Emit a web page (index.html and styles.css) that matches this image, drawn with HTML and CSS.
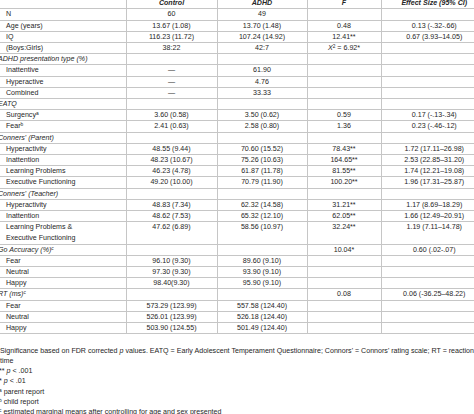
FILE: index.html
```html
<!DOCTYPE html>
<html lang="en">
<head>
<meta charset="utf-8">
<title>Table</title>
<link rel="stylesheet" href="styles.css">
</head>
<body>
<div class="page">
<table class="data">
<colgroup>
<col class="c0"><col class="c1"><col class="c2"><col class="c3"><col class="c4">
</colgroup>
<thead>
<tr class="head"><th></th><th>Control</th><th>ADHD</th><th>F</th><th>Effect Size (95% CI)</th></tr>
</thead>
<tbody>
<tr><td class="lbl">N</td><td>60</td><td>49</td><td></td><td></td></tr>
<tr><td class="lbl">Age (years)</td><td>13.67 (1.08)</td><td>13.70 (1.48)</td><td>0.48</td><td>0.13 (-.32-.66)</td></tr>
<tr><td class="lbl">IQ</td><td>116.23 (11.72)</td><td>107.24 (14.92)</td><td>12.41**</td><td>0.67 (3.93–14.05)</td></tr>
<tr><td class="lbl">(Boys:Girls)</td><td>38:22</td><td>42:7</td><td><i>X</i><sup>2</sup> = 6.92*</td><td></td></tr>
<tr><td class="sec">ADHD presentation type (%)</td><td></td><td></td><td></td><td></td></tr>
<tr><td class="lbl">Inattentive</td><td>—</td><td>61.90</td><td></td><td></td></tr>
<tr><td class="lbl">Hyperactive</td><td>—</td><td>4.76</td><td></td><td></td></tr>
<tr><td class="lbl">Combined</td><td>—</td><td>33.33</td><td></td><td></td></tr>
<tr><td class="sec">EATQ</td><td></td><td></td><td></td><td></td></tr>
<tr><td class="lbl">Surgency<sup>a</sup></td><td>3.60 (0.58)</td><td>3.50 (0.62)</td><td>0.59</td><td>0.17 (-.13-.34)</td></tr>
<tr><td class="lbl">Fear<sup>b</sup></td><td>2.41 (0.63)</td><td>2.58 (0.80)</td><td>1.36</td><td>0.23 (-.46-.12)</td></tr>
<tr><td class="sec">Conners' (Parent)</td><td></td><td></td><td></td><td></td></tr>
<tr><td class="lbl">Hyperactivity</td><td>48.55 (9.44)</td><td>70.60 (15.52)</td><td>78.43**</td><td>1.72 (17.11–26.98)</td></tr>
<tr><td class="lbl">Inattention</td><td>48.23 (10.67)</td><td>75.26 (10.63)</td><td>164.65**</td><td>2.53 (22.85–31.20)</td></tr>
<tr><td class="lbl">Learning Problems</td><td>46.23 (4.78)</td><td>61.87 (11.78)</td><td>81.55**</td><td>1.74 (12.21–19.08)</td></tr>
<tr><td class="lbl">Executive Functioning</td><td>49.20 (10.00)</td><td>70.79 (11.90)</td><td>100.20**</td><td>1.96 (17.31–25.87)</td></tr>
<tr><td class="sec">Conners' (Teacher)</td><td></td><td></td><td></td><td></td></tr>
<tr><td class="lbl">Hyperactivity</td><td>48.83 (7.34)</td><td>62.32 (14.58)</td><td>31.21**</td><td>1.17 (8.69–18.29)</td></tr>
<tr><td class="lbl">Inattention</td><td>48.62 (7.53)</td><td>65.32 (12.10)</td><td>62.05**</td><td>1.66 (12.49–20.91)</td></tr>
<tr class="dbl"><td class="lbl">Learning Problems &amp;<br>Executive Functioning</td><td>47.62 (6.89)</td><td>58.56 (10.97)</td><td>32.24**</td><td>1.19 (7.11–14.78)</td></tr>
<tr><td class="sec">Go Accuracy (%)<sup>c</sup></td><td></td><td></td><td>10.04*</td><td>0.60 (.02-.07)</td></tr>
<tr><td class="lbl">Fear</td><td>96.10 (9.30)</td><td>89.60 (9.10)</td><td></td><td></td></tr>
<tr><td class="lbl">Neutral</td><td>97.30 (9.30)</td><td>93.90 (9.10)</td><td></td><td></td></tr>
<tr><td class="lbl">Happy</td><td>98.40(9.30)</td><td>95.90 (9.10)</td><td></td><td></td></tr>
<tr><td class="sec">RT (ms)<sup>c</sup></td><td></td><td></td><td>0.08</td><td>0.06 (-36.25–48.22)</td></tr>
<tr><td class="lbl">Fear</td><td>573.29 (123.99)</td><td>557.58 (124.40)</td><td></td><td></td></tr>
<tr><td class="lbl">Neutral</td><td>526.01 (123.99)</td><td>526.18 (124.40)</td><td></td><td></td></tr>
<tr><td class="lbl">Happy</td><td>503.90 (124.55)</td><td>501.49 (124.40)</td><td></td><td></td></tr>
</tbody>
</table>
<div class="notes">
<p class="note-main">Significance based on FDR corrected <i>p</i> values. EATQ = Early Adolescent Temperament Questionnaire; Connors' = Connors' rating scale; RT = reaction time</p>
<p>** <i>p</i> &lt; .001</p>
<p>* <i>p</i> &lt; .01</p>
<p><sup>a</sup> parent report</p>
<p><sup>b</sup> child report</p>
<p><sup>c</sup> estimated marginal means after controlling for age and sex presented</p>
</div>
</div>
</body>
</html>
```
FILE: styles.css
```css
html, body {
  margin: 0;
  padding: 0;
  background: #ffffff;
}
body {
  font-family: "Liberation Sans", Arial, sans-serif;
  color: #262626;
}
.page {
  width: 474px;
  height: 414px;
  overflow: hidden;
}
.data {
  border-collapse: collapse;
  table-layout: fixed;
  width: 489px;
  margin: -1.8px 0 0 -2px;
  font-size: 7.1px;
}
.c0 { width: 128px; }
.c1 { width: 91px; }
.c2 { width: 90px; }
.c3 { width: 74px; }
.c4 { width: 106px; }
.data th,
.data td {
  padding: 0;
  height: 10.2px;
  line-height: 10.2px;
  border-bottom: 1px solid #c6c6c6;
  text-align: center;
  white-space: nowrap;
  vertical-align: middle;
}
.data th + th,
.data td + td {
  border-left: 1px solid #c6c6c6;
}
.data th {
  font-weight: bold;
  font-style: italic;
}
.data td.lbl {
  text-align: left;
  padding-left: 8px;
}
.data td.sec {
  text-align: left;
  font-style: italic;
  overflow: visible;
}
.data sup {
  font-size: 4.8px;
  line-height: 0;
  vertical-align: 2.5px;
}
.dbl td {
  vertical-align: top;
}
.dbl td.lbl {
  line-height: 10.7px;
}
.notes {
  margin: 11.5px 0 0 -1px;
  font-size: 7.1px;
  line-height: 10.2px;
}
.notes p {
  margin: 0;
  white-space: nowrap;
}
.notes .note-main {
  white-space: normal;
  width: 476px;
  padding-left: 1px;
}
.notes sup {
  font-size: 4.8px;
  line-height: 0;
  vertical-align: 2.5px;
}
```
